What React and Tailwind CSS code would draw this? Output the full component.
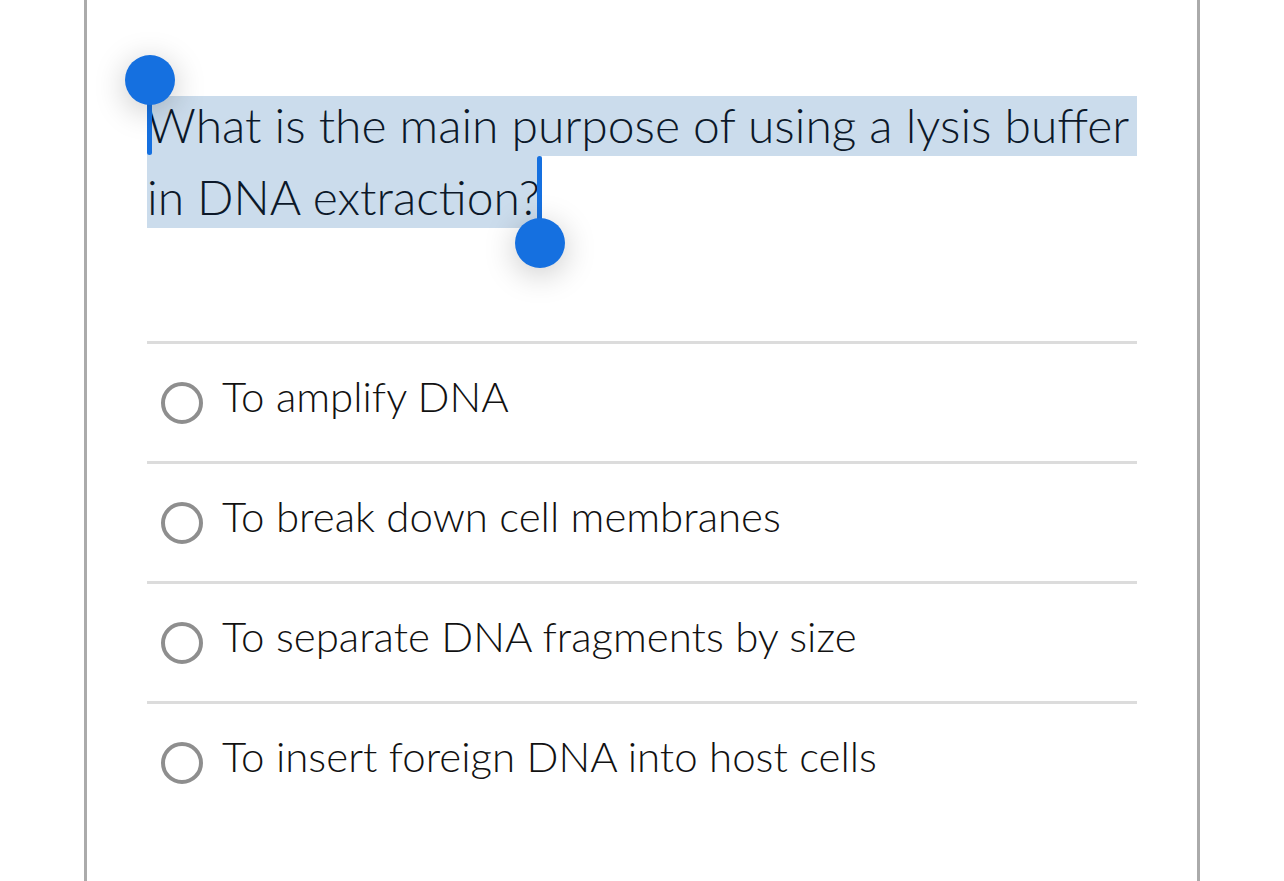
import React from 'react';

const options = [
  'To amplify DNA',
  'To break down cell membranes',
  'To separate DNA fragments by size',
  'To insert foreign DNA into host cells',
];

function Handle({ className, stemClass }) {
  return (
    <div className={`absolute pointer-events-none ${className}`}>
      <div className={`absolute w-[5px] rounded-full bg-[#1570e0] ${stemClass}`} />
      <div className="absolute -left-[22px] w-[50px] h-[50px] rounded-full bg-[#1570e0] shadow-[0_6px_32px_rgba(0,0,0,0.22)]" />
    </div>
  );
}

export default function App() {
  return (
    <div className="min-h-[881px] bg-white font-['Lato','Liberation_Sans',sans-serif]">
      <div className="relative ml-[84px] w-[1116px] h-[881px] border-x-[3px] border-[#ababab] px-[60px] pt-[96px]">
        {/* selected question */}
        <div className="text-[48px] font-light text-[#0c1829]">
          <div className="h-[60px] leading-[57px] bg-[#cbdcec] whitespace-nowrap">
            What is the main purpose of using a lysis buffer
          </div>
          <div className="h-[72px] pt-[12px] leading-[57px]">
            <span className="inline-block h-[72px] -mt-[12px] pt-[12px] pr-[2px] bg-[#cbdcec] whitespace-nowrap">
              in DNA extraction?
            </span>
          </div>
        </div>

        {/* selection handles */}
        <Handle className="left-[60px] top-[55px]" stemClass="left-[0px] top-[45px] h-[55px]" />
        <Handle className="left-[450px] top-[218px]" stemClass="left-[0px] -top-[62px] h-[80px]" />

        {/* answer options */}
        <div className="mt-[113px]">
          {options.map((opt) => (
            <div key={opt} className="h-[120px] border-t-[3px] border-[#dcdcdc] flex items-start">
              <div className="ml-[14px] mt-[38px] w-[42px] h-[42px] rounded-full border-[4px] border-[#8e8e8e] shrink-0" />
              <div className="ml-[19px] mt-[27px] text-[42px] leading-[50px] font-light text-[#111111] whitespace-nowrap">
                {opt}
              </div>
            </div>
          ))}
        </div>
      </div>
    </div>
  );
}
